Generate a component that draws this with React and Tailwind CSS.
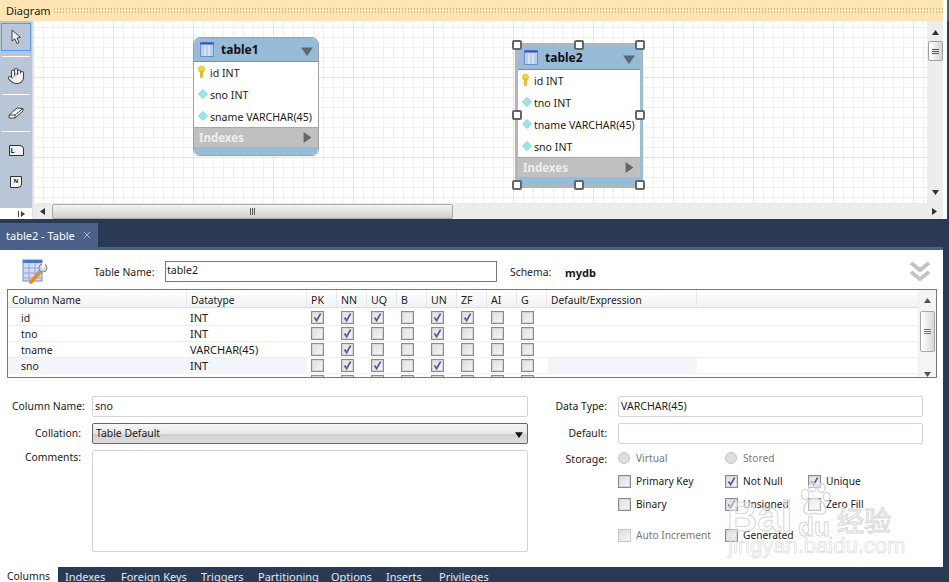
import React from "react";
import { Hand, X } from "lucide-react";

const font = "font-['Noto_Sans','Liberation_Sans',sans-serif]";

function Tri({ dir = "up", size = 7, color = "#444" }) {
  const pts = { up: "0,7 7,7 3.5,2", down: "0,2 7,2 3.5,7", left: "6,0 6,7 1,3.5", right: "1,0 1,7 6,3.5" }[dir];
  return (
    <svg width={size} height={size} viewBox="0 0 7 7" className="shrink-0">
      <polygon points={pts} fill={color} />
    </svg>
  );
}

function Cb({ on, faded }) {
  return (
    <span className={`inline-flex w-[13px] h-[13px] shrink-0 items-center justify-center border bg-[linear-gradient(135deg,#dedede,#f6f6f6)] ${faded ? "border-[#c8c8c8]" : "border-[#8a8a8a] shadow-[inset_0_0_0_1px_#d6d6d6]"}`}>
      {on && (
        <svg width="11" height="11" viewBox="0 0 11 11">
          <path d="M2.5 5.5 L4.6 8.6 L8.6 1.6" fill="none" stroke="#47609f" strokeWidth="1.8" />
        </svg>
      )}
    </span>
  );
}

function Radio() {
  return <span className="inline-block w-[12px] h-[12px] mr-px rounded-full border border-[#c4c4c4] bg-[#dedede] shrink-0" />;
}

function KeyIcon() {
  return (
    <svg width="7" height="12" viewBox="0 0 7 12" className="shrink-0 -mt-[2px]">
      <ellipse cx="3.5" cy="3.2" rx="3" ry="3" fill="#f8d92e" stroke="#cfa312" strokeWidth="0.6" />
      <rect x="2.2" y="5" width="2.6" height="6.4" fill="#f2c41c" stroke="#cfa312" strokeWidth="0.5" />
    </svg>
  );
}

function Diamond() {
  return (
    <svg width="10" height="10" viewBox="0 0 10 10" className="shrink-0 -mt-[2px]">
      <polygon points="5,0.4 9.6,5 5,9.6 0.4,5" fill="#8eeaea" stroke="#9cbcc0" strokeWidth="0.7" />
    </svg>
  );
}

function TableIcon() {
  return (
    <svg width="14" height="15" viewBox="0 0 14 15" className="shrink-0">
      <rect x="0.5" y="0.5" width="13" height="14" fill="#bccdec" stroke="#6f8dc4" />
      <rect x="0.5" y="0.5" width="13" height="2" fill="#3552c4" />
      <path d="M5 3v11M9 3v11" stroke="#f0f4fb" strokeWidth="1" />
    </svg>
  );
}

function Node({ name, rows, left, top, width, bodyRows, selected }) {
  const frame = selected
    ? "outline outline-2 outline-[#b4b4b4] border border-[#84c8e4]"
    : "border border-[#a0a0a0] rounded-[7px]";
  return (
    <div className={`absolute flex flex-col overflow-visible ${frame}`} style={{ left, top, width }}>
      <div className={`h-[23px] bg-[#96bcd8] flex items-center pl-[6px] pr-[5px] ${selected ? "" : "rounded-t-[6px]"}`}>
        <TableIcon />
        <span className="ml-[7px] text-[12px] font-bold text-[#111] leading-none">{name}</span>
        <span className="ml-auto"><Tri dir="down" size={12} color="#5f6870" /></span>
      </div>
      <div className="bg-white flex flex-col border-t border-[#8a8a8a]" style={{ height: bodyRows * 22 }}>
        {rows.map(([pk, t]) => (
          <div key={t} className="h-[22px] shrink-0 flex items-center pl-[4px] text-[10.6px] text-[#1a1a1a] leading-none">
            <span className="w-[12px] flex justify-start">{pk ? <KeyIcon /> : <Diamond />}</span>
            <span className="whitespace-nowrap">{t}</span>
          </div>
        ))}
      </div>
      <div className="h-[20px] bg-[#c0c0c0] border-t border-[#a8a8a8] flex items-center pl-[5px] pr-[5px]">
        <span className="text-[11.5px] font-bold text-[#eeeeee]">Indexes</span>
        <span className="ml-auto"><Tri dir="right" size={11} color="#666" /></span>
      </div>
      <div className={`h-[8px] bg-[#96bcd8] ${selected ? "" : "rounded-b-[6px]"}`} />
    </div>
  );
}

function Handle({ x, y }) {
  return <span className="absolute w-[10px] h-[10px] bg-white border-2 border-[#666] rounded-[2px]" style={{ left: x - 5, top: y - 5 }} />;
}

const CHECK_COLS = ["PK", "NN", "UQ", "B", "UN", "ZF", "AI", "G"];
const ROWS = [
  ["id", "INT", [1, 1, 1, 0, 1, 1, 0, 0]],
  ["tno", "INT", [0, 1, 0, 0, 1, 0, 0, 0]],
  ["tname", "VARCHAR(45)", [0, 1, 0, 0, 0, 0, 0, 0]],
  ["sno", "INT", [0, 1, 1, 0, 1, 0, 0, 0]],
  ["", "", [0, 0, 0, 0, 0, 0, 0, 0]],
];

function GridTable() {
  const cols = "grid grid-cols-[179px_120px_repeat(8,30px)_150px_222px]";
  const head = "pl-[4px] pt-px border-r border-[#e8e8e8] leading-[18px]";
  return (
    <div className="mx-[7px] mt-[7px] h-[89px] w-[930px] border border-[#777] flex overflow-hidden bg-white">
      <div className="flex-1 min-w-0 overflow-hidden">
        <div className={`${cols} h-[18px] border-b border-[#ddd] bg-[linear-gradient(#ffffff,#f0f2f4)] text-[10.2px] text-[#1a1a1a]`}>
          <div className={head}>Column Name</div>
          <div className={head}>Datatype</div>
          {CHECK_COLS.map((c) => (
            <div key={c} className={`${head} text-[10.6px]`}>{c}</div>
          ))}
          <div className={head}>Default/Expression</div>
          <div />
        </div>
        <div className="h-[2px]" />
        {ROWS.map(([n, t, c], i) => (
          <div key={i} className={`${cols} h-[16px] border-b border-[#eeeeee] text-[#1a1a1a] leading-[16px]`}>
            <div className={`pl-[13px] text-[10.4px] ${i === 3 ? "bg-[#f2f5fa]" : ""}`}>{n}</div>
            <div className={`pl-[3px] text-[11px] ${i === 3 ? "bg-[#f2f5fa]" : ""}`}>{t}</div>
            {c.map((v, j) => (
              <div key={j} className="flex pl-[4px] pt-[1px]"><Cb on={!!v} /></div>
            ))}
            <div className={i === 3 ? "bg-[#f2f5fa] ml-[1px]" : ""} />
            <div />
          </div>
        ))}
      </div>
      <div className="w-[18px] shrink-0 flex flex-col items-center bg-[#f4f4f4] border-l border-[#eeeeee] pt-[6px]">
        <Tri dir="up" size={7} color="#555" />
        <div className="mt-[8px] w-[15px] h-[41px] shrink-0 rounded-[2px] border border-[#a8a8a8] bg-[linear-gradient(90deg,#ffffff,#d8d8d8)] flex flex-col items-center justify-center gap-[1px]">
          <span className="w-[7px] h-px bg-[#777]" />
          <span className="w-[7px] h-px bg-[#777]" />
          <span className="w-[7px] h-px bg-[#777]" />
        </div>
        <div className="mt-[18px]"><Tri dir="down" size={7} color="#555" /></div>
      </div>
    </div>
  );
}

const inputCls = "h-[21px] border border-[#d0d3d8] rounded-[2px] bg-white text-[10.6px] text-[#1a1a1a] pl-[2px] leading-[19px]";
const labelCls = "text-right text-[10.4px] text-[#1a1a1a] leading-[21px] whitespace-nowrap";

function Opt({ control, label, muted }) {
  return (
    <div className="flex items-center gap-[5px] h-[14px]">
      {control}
      <span className={`text-[10.2px] whitespace-nowrap leading-none ${muted ? "text-[#777]" : "text-[#1a1a1a]"}`}>{label}</span>
    </div>
  );
}

function Watermark() {
  const latin = "font-['Liberation_Sans',sans-serif]";
  return (
    <div className="absolute left-[727px] top-[232px] w-[172px] h-[80px] pointer-events-none">
      <svg width="34" height="34" viewBox="0 0 44 46" className="absolute left-[70px] top-0">
        <g fill="#ffffff" fillOpacity="0.45" stroke="#d6d6d6" strokeWidth="1.8">
          <ellipse cx="10" cy="17" rx="5" ry="7" />
          <ellipse cx="20" cy="7" rx="5" ry="6" />
          <ellipse cx="32" cy="8" rx="5" ry="6" />
          <ellipse cx="39" cy="20" rx="4.5" ry="6" />
          <path d="M8 38 C8 28 16 22 23 22 C30 22 38 30 38 38 C38 45 28 44 23 42 C18 44 8 45 8 38Z" />
        </g>
      </svg>
      <span className={`absolute left-0 top-[14px] text-[42px] font-bold leading-none text-white/45 [-webkit-text-stroke:1px_#d6d6d6] ${latin}`}>Bai</span>
      <span className={`absolute left-[71px] top-[32px] text-[26px] font-bold leading-none text-white/45 [-webkit-text-stroke:1px_#d6d6d6] ${latin}`}>du</span>
      <span className="absolute left-[110px] top-[24px] text-[27px] leading-none text-white/45 [-webkit-text-stroke:1px_#d6d6d6] font-['Noto_Sans_CJK_SC',sans-serif]">经验</span>
      <span className={`absolute left-[1px] top-[53px] text-[22px] leading-none text-white/45 [-webkit-text-stroke:0.6px_#d6d6d6] ${latin}`}>jingyan.baidu.com</span>
    </div>
  );
}

function Sep() {
  return <div className="mx-[2px] h-px bg-white" />;
}

export default function App() {
  return (
    <div className={`w-[949px] h-[582px] overflow-hidden flex bg-[#2a3a55] ${font}`}>
      <div className="w-[943px] flex flex-col shrink-0">
        {/* Diagram header */}
        <div className="h-[21px] bg-[#fde6b3] flex items-center pl-[6px] gap-[3px]">
          <span className="w-[44px] text-[11px] text-[#1a1a1a] leading-none whitespace-nowrap">Diagram</span>
          <div className="flex-1 h-[7px] bg-[radial-gradient(circle,#c9b07a_0.8px,transparent_1px)] bg-[length:3px_3.5px]" />
        </div>
        {/* Diagram body */}
        <div className="h-[198px] flex bg-white">
          <div className="w-[33px] shrink-0 flex flex-col bg-[#b9c6d8] border-r border-[#d8dfe9]">
            <div className="mt-[2px] mx-[1px] h-[28px] border border-[#4d9cff] flex items-center justify-center">
              <svg width="12" height="16" viewBox="0 0 12 16">
                <path d="M2 1 L2 12 L4.8 9.8 L7 14.5 L9 13.5 L7 9 L10.5 8.5 Z" fill="#f2f2f2" stroke="#444" strokeWidth="1" />
              </svg>
            </div>
            <div className="h-[5px]" />
            <Sep />
            <div className="h-[37px] flex items-center justify-center">
              <Hand size={18} fill="#f5f5f5" stroke="#444" strokeWidth={1.4} />
            </div>
            <Sep />
            <div className="h-[36px] flex items-center justify-center">
              <svg width="16" height="12" viewBox="0 0 16 12">
                <path d="M1 8 L9 1 L15 1.5 L15 4 L7 11 L1 11 Z" fill="#f6f6f6" stroke="#444" />
                <path d="M1 8 L7 8 L15 1.5 M7 8 L7 11" fill="none" stroke="#444" />
              </svg>
            </div>
            <Sep />
            <div className="h-[36px] flex items-center justify-center">
              <div className="relative w-[15px] h-[11px] bg-[#f4f4f4] border border-[#333] rounded-tr-[4px] flex items-end pl-[1px]">
                <span className="text-[7px] font-bold leading-[8px] text-[#222]">L</span>
              </div>
            </div>
            <div className="h-[28px] flex items-center justify-center">
              <div className="w-[12px] h-[12px] bg-[#f4f4f4] border border-[#333] rounded-br-[4px] flex justify-center">
                <span className="text-[6px] font-bold leading-[8px] text-[#222]">N</span>
              </div>
            </div>
            <div className="mt-auto h-[11px] bg-white flex items-center justify-end pr-[6px]">
              <span className="w-px h-[6px] bg-[#444] mr-px" />
              <Tri dir="right" size={6} color="#444" />
            </div>
          </div>
          <div className="flex-1 min-w-0 flex flex-col">
            <div className="flex-1 min-h-0 flex">
              <div className="relative flex-1 min-w-0 bg-white bg-[linear-gradient(#e2e2e2_1px,transparent_1px),linear-gradient(90deg,#e2e2e2_1px,transparent_1px),linear-gradient(#f0f0f0_1px,transparent_1px),linear-gradient(90deg,#f0f0f0_1px,transparent_1px)] bg-[length:80px_80px,80px_80px,10px_10px,10px_10px] bg-[position:0_56px,0_0,0_6px,0_0]">
                <Node name="table1" left={160} top={16} width={126} bodyRows={3}
                  rows={[[1, "id INT"], [0, "sno INT"], [0, "sname VARCHAR(45)"]]} />
                <Node name="table2" selected left={484} top={24} width={124} bodyRows={4}
                  rows={[[1, "id INT"], [0, "tno INT"], [0, "tname VARCHAR(45)"], [0, "sno INT"]]} />
                <Handle x={484} y={24} />
                <Handle x={546} y={24} />
                <Handle x={607} y={24} />
                <Handle x={484} y={94} />
                <Handle x={607} y={94} />
                <Handle x={484} y={164} />
                <Handle x={546} y={164} />
                <Handle x={607} y={164} />
              </div>
              <div className="w-[16px] shrink-0 bg-[#ededed] flex flex-col items-center pt-[7px] pb-[8px]">
                <Tri dir="up" size={7} color="#333" />
                <div className="mt-[6px] w-[15px] h-[20px] rounded-[2px] border border-[#a0a0a0] bg-[linear-gradient(90deg,#ffffff,#d4d4d4)] flex flex-col items-center justify-center gap-[1px]">
                  <span className="w-[7px] h-px bg-[#555]" />
                  <span className="w-[7px] h-px bg-[#555]" />
                  <span className="w-[7px] h-px bg-[#555]" />
                </div>
                <div className="mt-auto"><Tri dir="down" size={7} color="#333" /></div>
              </div>
            </div>
            <div className="h-[16px] bg-[#ececec] flex items-center shrink-0">
              <div className="w-[19px] flex justify-center"><Tri dir="left" size={7} color="#333" /></div>
              <div className="w-[401px] h-[15px] rounded-[2px] border border-[#a8a8a8] bg-[linear-gradient(#f4f4f4,#cfcfcf)] flex items-center justify-center gap-[1px]">
                <span className="w-px h-[7px] bg-[#555]" />
                <span className="w-px h-[7px] bg-[#555]" />
                <span className="w-px h-[7px] bg-[#555]" />
              </div>
              <div className="ml-auto pr-[5px]"><Tri dir="right" size={7} color="#333" /></div>
            </div>
          </div>
        </div>
        {/* Editor tab bar */}
        <div className="h-[28px] pt-[4px] shrink-0">
          <div className="w-[98px] h-[24px] bg-[#4a6189] flex items-center pl-[6px] gap-[5px] text-[11px] text-white leading-none">
            <span className="w-[70px] whitespace-nowrap">table2 - Table</span>
            <X size={12} stroke="#a9b6c9" />
          </div>
        </div>
        <div className="h-[3px] bg-[#4a6189] shrink-0" />
        {/* Editor panel */}
        <div className="relative flex-1 min-h-0 bg-white">
          <div className="flex items-center h-[21px] mt-[11px]">
            <svg width="26" height="26" viewBox="0 0 26 26" className="ml-[22px] shrink-0">
              <rect x="1" y="1" width="19" height="21" fill="#cfdcf4" stroke="#6f8fcb" />
              <rect x="1" y="1" width="19" height="3" fill="#4a74d0" />
              <path d="M7 4v18M13 4v18M1 9h19M1 14h19M1 19h19" stroke="#8fa8d8" strokeWidth="1" />
              <path d="M9 23 L18 13" stroke="#ef8a22" strokeWidth="4" strokeLinecap="round" />
              <path d="M16 14 L21 9" stroke="#a0a0a0" strokeWidth="3" />
              <circle cx="21" cy="9" r="4" fill="#d8d8d8" stroke="#8a8a8a" />
              <rect x="20" y="4" width="3" height="5" fill="#ffffff" />
            </svg>
            <span className="ml-[46px] w-[60px] pt-[3px] text-[10.4px] text-[#1a1a1a] whitespace-nowrap">Table Name:</span>
            <div className="ml-[11px] w-[332px] h-[21px] border border-[#777] text-[10.6px] text-[#1a1a1a] pl-[1px] leading-[16px] shrink-0">table2</div>
            <span className="ml-[13px] w-[41px] pt-[3px] text-[10.4px] text-[#1a1a1a]">Schema:</span>
            <span className="ml-[14px] pt-[3px] text-[11px] font-bold text-[#1a1a1a]">mydb</span>
            <svg width="22" height="22" viewBox="0 0 22 22" className="ml-auto mr-[12px] shrink-0">
              <path d="M2 2 L11 9 L20 2 M2 11 L11 18 L20 11" fill="none" stroke="#c4c4c4" strokeWidth="4" />
            </svg>
          </div>
          <GridTable />
          <div className="flex mt-[18px]">
            <div className="ml-[12px] w-[516px] grid grid-cols-[69px_436px] gap-x-[11px] gap-y-[6px] content-start">
              <div className={labelCls}>Column Name:</div>
              <div className={inputCls}>sno</div>
              <div className={labelCls}>Collation:</div>
              <div className="h-[21px] border border-[#666] rounded-[2px] bg-[linear-gradient(#f6f6f6,#e8e8e8_50%,#cfcfcf_55%,#dedede)] text-[10.4px] text-[#1a1a1a] pl-[3px] pr-[4px] flex items-center">
                <span>Table Default</span>
                <span className="ml-auto"><Tri dir="down" size={8} color="#111" /></span>
              </div>
              <div className="text-right text-[10.4px] text-[#1a1a1a] leading-[15px] whitespace-nowrap">Comments:</div>
              <div className="h-[102px] border border-[#d0d3d8] rounded-[2px] bg-white" />
            </div>
            <div className="ml-[25px] w-[370px] flex flex-col">
              <div className="grid grid-cols-[54px_305px] gap-x-[11px] gap-y-[6px]">
                <div className={labelCls}>Data Type:</div>
                <div className={inputCls}>VARCHAR(45)</div>
                <div className={labelCls}>Default:</div>
                <div className={inputCls} />
              </div>
              <div className="grid grid-cols-[54px_107px_83px_1fr] gap-x-[11px] mt-[7px]">
                <div className="text-right text-[10.6px] text-[#1a1a1a] leading-[16px]">Storage:</div>
                <div className="col-span-3 grid grid-cols-[107px_83px_1fr] gap-y-[9px]">
                  <Opt control={<Radio />} label="Virtual" muted />
                  <div className="col-span-2"><Opt control={<Radio />} label="Stored" muted /></div>
                  <Opt control={<Cb />} label="Primary Key" />
                  <Opt control={<Cb on />} label="Not Null" />
                  <Opt control={<Cb on />} label="Unique" />
                  <Opt control={<Cb />} label="Binary" />
                  <Opt control={<Cb on />} label="Unsigned" />
                  <Opt control={<Cb />} label="Zero Fill" />
                  <div className="mt-[8px]"><Opt control={<Cb faded />} label="Auto Increment" muted /></div>
                  <div className="mt-[8px] col-span-2"><Opt control={<Cb />} label="Generated" /></div>
                </div>
              </div>
            </div>
          </div>
          <Watermark />
        </div>
        {/* Bottom tabs */}
        <div className="h-[15px] shrink-0 flex items-start text-[11px] leading-[19px] text-[#e4e8ee] overflow-hidden">
          <div className="w-[58px] h-[15px] bg-white text-[#1a1a1a] text-[10.4px] pl-[7px]">Columns</div>
          <div className="ml-[7px] w-[56px]">Indexes</div>
          <div className="w-[80px]">Foreign Keys</div>
          <div className="w-[57px]">Triggers</div>
          <div className="w-[73px]">Partitioning</div>
          <div className="w-[55px]">Options</div>
          <div className="w-[53px]">Inserts</div>
          <div>Privileges</div>
        </div>
      </div>
      <div className="w-[6px] shrink-0 flex flex-col">
        <div className="h-[219px] flex">
          <div className="w-[4px] bg-white" />
          <div className="w-[2px] flex flex-col">
            <div className="h-[21px] bg-[#47608a]" />
            <div className="flex-1 bg-[#2a3a55]" />
          </div>
        </div>
      </div>
    </div>
  );
}
